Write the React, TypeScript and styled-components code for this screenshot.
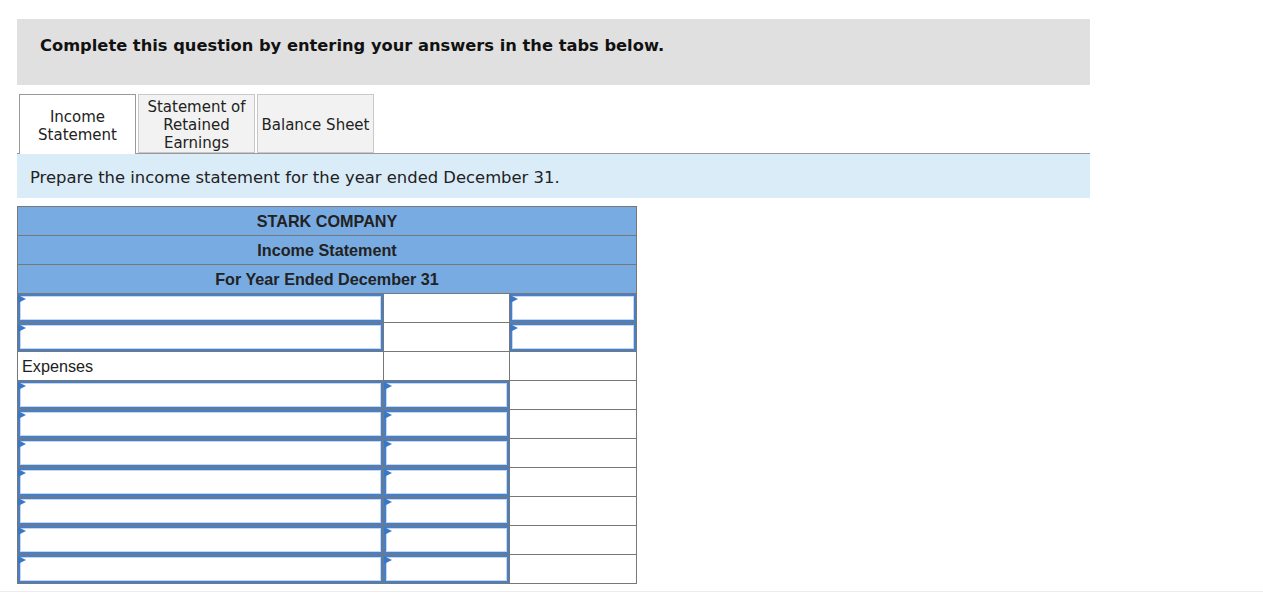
import React from "react";
import styled, { createGlobalStyle } from "styled-components";

const GlobalStyle = createGlobalStyle`
  html, body {
    margin: 0;
    padding: 0;
    background: #fff;
  }
`;

const Page = styled.div`
  padding: 19px 0 0 17px;
  height: 572px;
  border-bottom: 1px solid #ececec;
`;

const Wrapper = styled.div`
  width: 1073px;
`;

const Banner = styled.div`
  background: #e0e0e0;
  height: 66px;
  padding: 17px 0 0 23px;
  box-sizing: border-box;
  font-family: "DejaVu Sans", Verdana, sans-serif;
  font-weight: bold;
  font-size: 16.3px;
  color: #111;
`;

const TabBar = styled.div`
  display: flex;
  gap: 2px;
  margin-top: 9px;
  padding-left: 2px;
  border-bottom: 1px solid #999;
  height: 59px;
`;

const Tab = styled.div<{ $active?: boolean }>`
  width: 117px;
  box-sizing: border-box;
  height: ${(p) => (p.$active ? "60px" : "59px")};
  border: 1px solid ${(p) => (p.$active ? "#999" : "#c8c8c8")};
  border-bottom: ${(p) => (p.$active ? "none" : "1px solid #c8c8c8")};
  background: ${(p) => (p.$active ? "#fff" : "#f2f2f2")};
  display: flex;
  align-items: center;
  justify-content: center;
  text-align: center;
  padding-top: 2px;
  font-family: "DejaVu Sans", Verdana, sans-serif;
  font-size: 15px;
  line-height: 18px;
  color: #222;
  z-index: 1;
  white-space: nowrap;
`;

const Instructions = styled.div`
  background: #dbecf9;
  height: 44px;
  display: flex;
  align-items: center;
  padding: 2px 0 0 13px;
  box-sizing: border-box;
  font-family: "DejaVu Sans", Verdana, sans-serif;
  font-size: 16.4px;
  color: #222;
`;

const Sheet = styled.table`
  margin-top: 8px;
  border-collapse: collapse;
  width: 619px;
  table-layout: fixed;
  font-family: "Liberation Sans", Arial, sans-serif;
  font-size: 16.2px;
  color: #222;
`;

const HeadCell = styled.td`
  background: #78abe2;
  border: 1px solid #777;
  height: 28px;
  padding: 0;
  line-height: 28px;
  text-align: center;
  font-weight: bold;
`;

const Cell = styled.td`
  border: 1px solid #777;
  height: 28px;
  padding: 0;
  vertical-align: top;
`;

const Label = styled.div`
  padding: 5px 0 0 4px;
`;

const InputBox = styled.div`
  position: relative;
  height: 28px;
  box-sizing: border-box;
  border: 2px solid #4a80c3;
  box-shadow: inset 0 0 0 1px #c3d7f0;

  &::before {
    content: "";
    position: absolute;
    z-index: 1;
    top: -1px;
    left: -2px;
    width: 0;
    height: 0;
    border-left: 8px solid #3a78c6;
    border-top: 4.5px solid transparent;
    border-bottom: 4.5px solid transparent;
  }
`;

const Field = styled.input`
  display: block;
  width: 100%;
  height: 100%;
  box-sizing: border-box;
  border: none;
  background: transparent;
  outline: none;
  padding: 0 8px;
  font: inherit;
`;

const Entry = () => (
  <InputBox>
    <Field type="text" />
  </InputBox>
);

type Row = [boolean | string, boolean, boolean];

const rows: Row[] = [
  [true, false, true],
  [true, false, true],
  ["Expenses", false, false],
  [true, true, false],
  [true, true, false],
  [true, true, false],
  [true, true, false],
  [true, true, false],
  [true, true, false],
  [true, true, false],
];

export default function App() {
  return (
    <>
      <GlobalStyle />
      <Page>
        <Wrapper>
          <Banner>Complete this question by entering your answers in the tabs below.</Banner>
          <TabBar>
            <Tab $active>
              Income
              <br />
              Statement
            </Tab>
            <Tab>
              Statement of
              <br />
              Retained
              <br />
              Earnings
            </Tab>
            <Tab>Balance Sheet</Tab>
          </TabBar>
          <Instructions>Prepare the income statement for the year ended December 31.</Instructions>
          <Sheet>
            <colgroup>
              <col style={{ width: 366 }} />
              <col style={{ width: 126 }} />
              <col style={{ width: 127 }} />
            </colgroup>
            <tbody>
              <tr>
                <HeadCell colSpan={3}>STARK COMPANY</HeadCell>
              </tr>
              <tr>
                <HeadCell colSpan={3}>Income Statement</HeadCell>
              </tr>
              <tr>
                <HeadCell colSpan={3}>For Year Ended December 31</HeadCell>
              </tr>
              {rows.map((r, i) => (
                <tr key={i}>
                  <Cell>{typeof r[0] === "string" ? <Label>{r[0]}</Label> : r[0] ? <Entry /> : null}</Cell>
                  <Cell>{r[1] ? <Entry /> : null}</Cell>
                  <Cell>{r[2] ? <Entry /> : null}</Cell>
                </tr>
              ))}
            </tbody>
          </Sheet>
        </Wrapper>
      </Page>
    </>
  );
}
